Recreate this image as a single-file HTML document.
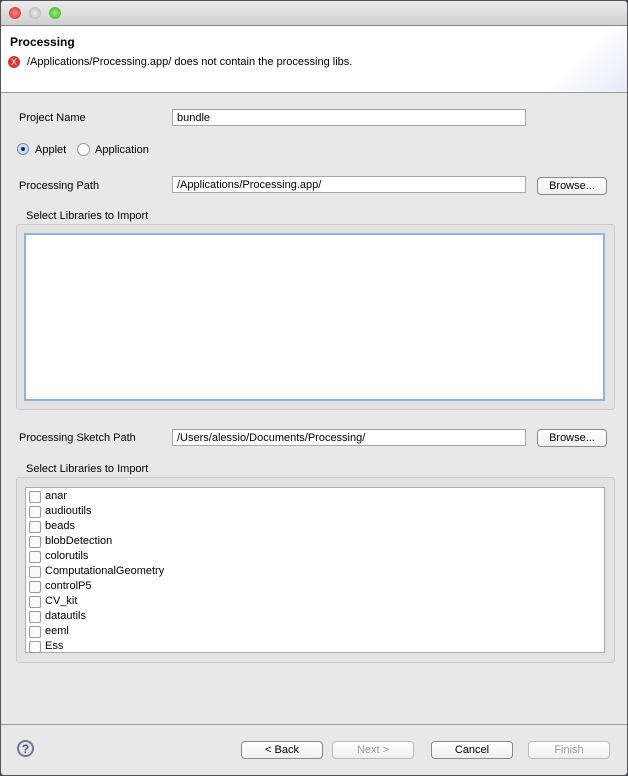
<!DOCTYPE html><html><head><style>
body{margin:0;width:628px;height:776px;background:#3a4a5a;font-family:"Liberation Sans",sans-serif;font-size:11px;color:#000;overflow:hidden;position:relative}
.a{position:absolute}
.win{left:0;top:0;width:626px;height:774px;border:1px solid #555;background:#e8e8e8;border-radius:4px 4px 4px 4px;overflow:hidden}
.tb{left:0;top:0;width:626px;height:24px;background:linear-gradient(#ececec,#cfcfcf);border-bottom:1px solid #888}
.dot{width:12px;height:12px;border-radius:50%;top:6px}
.hdr{left:0;top:25px;width:626px;height:66px;background:#fff;border-bottom:1px solid #999}
.inp{height:17px;background:#fff;border:1px solid #a8a8a8;box-sizing:border-box;padding:1px 4px;font-size:11px;line-height:14px}
.btn{height:18px;background:linear-gradient(#fff,#f0f0f0);border:1px solid #888;border-radius:4px;box-sizing:border-box;text-align:center;font-size:11px;line-height:16px}
.dis{color:#999;border-color:#bbb}
.grp{border:1px solid #ccc;border-radius:3px;background:#e3e3e3}
.cb{width:10px;height:10px;border:1px solid #999;border-radius:2px;background:#fafafa;left:3px}
.row{left:0;height:15px;width:300px}
.row span{position:absolute;left:19px;top:1px}
</style></head><body>
<div class="a win">
<div class="a tb">
<div class="a dot" style="left:8px;background:radial-gradient(#f88,#c22)"></div>
<div class="a dot" style="left:28px;background:radial-gradient(#eee,#aaa)"></div>
<div class="a dot" style="left:48px;background:radial-gradient(#9e7,#3a2)"></div>
</div>
<div class="a hdr">
<div class="a" style="left:9px;top:9px;font-weight:bold;font-size:12px">Processing</div>
<div class="a" style="left:7px;top:30px;width:12px;height:12px;border-radius:50%;background:#d33;color:#fff;font-size:9px;line-height:12px;text-align:center">X</div>
<div class="a" style="left:26px;top:30px">/Applications/Processing.app/ does not contain the processing libs.</div>
<div class="a" style="right:0;top:0;width:80px;height:66px;background:linear-gradient(135deg,#fff 40%,#e6eaf6)"></div>
</div>
<div class="a" style="left:18px;top:111px">Project Name</div>
<div class="a inp" style="left:171px;top:108px;width:354px">bundle</div>
<div class="a" style="left:16px;top:142px;width:12px;height:12px;border-radius:50%;border:1px solid #6a8ac0;background:#cfe0f6;box-sizing:border-box"><div class="a" style="left:3px;top:3px;width:4px;height:4px;border-radius:50%;background:#223"></div></div>
<div class="a" style="left:34px;top:143px">Applet</div>
<div class="a" style="left:76px;top:142px;width:13px;height:13px;border-radius:50%;border:1px solid #999;background:#fafafa;box-sizing:border-box"></div>
<div class="a" style="left:94px;top:143px">Application</div>
<div class="a" style="left:18px;top:179px">Processing Path</div>
<div class="a inp" style="left:171px;top:175px;width:354px">/Applications/Processing.app/</div>
<div class="a btn" style="left:536px;top:176px;width:70px">Browse...</div>
<div class="a" style="left:25px;top:209px">Select Libraries to Import</div>
<div class="a grp" style="left:15px;top:223px;width:597px;height:184px"></div>
<div class="a" style="left:23px;top:232px;width:581px;height:168px;background:#fff;border:2px solid #8db2e3;box-sizing:border-box"></div>
<div class="a" style="left:18px;top:431px">Processing Sketch Path</div>
<div class="a inp" style="left:171px;top:428px;width:354px">/Users/alessio/Documents/Processing/</div>
<div class="a btn" style="left:536px;top:428px;width:70px">Browse...</div>
<div class="a" style="left:25px;top:462px">Select Libraries to Import</div>
<div class="a grp" style="left:15px;top:476px;width:597px;height:184px"></div>
<div class="a" style="left:24px;top:486px;width:580px;height:166px;background:#fff;border:1px solid #aaa;box-sizing:border-box">
<div class="a row" style="top:1px"><div class="a cb" style="top:2px"></div><span>anar</span></div>
<div class="a row" style="top:16px"><div class="a cb" style="top:2px"></div><span>audioutils</span></div>
<div class="a row" style="top:31px"><div class="a cb" style="top:2px"></div><span>beads</span></div>
<div class="a row" style="top:46px"><div class="a cb" style="top:2px"></div><span>blobDetection</span></div>
<div class="a row" style="top:61px"><div class="a cb" style="top:2px"></div><span>colorutils</span></div>
<div class="a row" style="top:76px"><div class="a cb" style="top:2px"></div><span>ComputationalGeometry</span></div>
<div class="a row" style="top:91px"><div class="a cb" style="top:2px"></div><span>controlP5</span></div>
<div class="a row" style="top:106px"><div class="a cb" style="top:2px"></div><span>CV_kit</span></div>
<div class="a row" style="top:121px"><div class="a cb" style="top:2px"></div><span>datautils</span></div>
<div class="a row" style="top:136px"><div class="a cb" style="top:2px"></div><span>eeml</span></div>
<div class="a row" style="top:151px"><div class="a cb" style="top:2px"></div><span>Ess</span></div>
</div>
<div class="a" style="left:0;top:723px;width:626px;height:1px;background:#999"></div>
<div class="a" style="left:16px;top:739px;width:17px;height:17px;border-radius:50%;border:2px solid #6a7a98;box-sizing:border-box;text-align:center;font-weight:bold;color:#4a5a78;font-size:12px;line-height:14px">?</div>
<div class="a btn" style="left:240px;top:740px;width:82px">&lt; Back</div>
<div class="a btn dis" style="left:331px;top:740px;width:82px">Next &gt;</div>
<div class="a btn" style="left:430px;top:740px;width:82px">Cancel</div>
<div class="a btn dis" style="left:527px;top:740px;width:82px">Finish</div>
</div>
</body></html>
